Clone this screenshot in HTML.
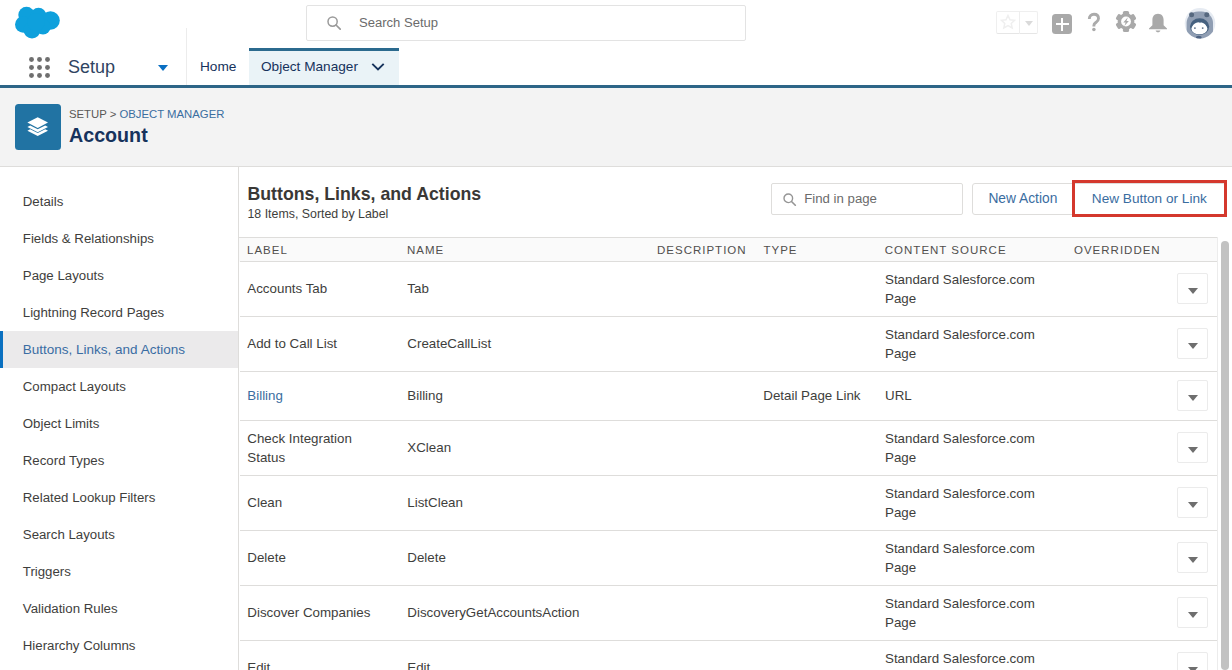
<!DOCTYPE html>
<html><head><meta charset="utf-8"><title>Setup</title>
<style>
*{box-sizing:border-box;margin:0;padding:0}
html,body{width:1232px;height:670px;overflow:hidden;background:#fff;font-family:"Liberation Sans",sans-serif}
.a{position:absolute}
.t{position:absolute;white-space:nowrap;line-height:20px}
</style></head><body>
<svg class="a" style="left:0;top:0" width="70" height="45" viewBox="0 0 70 45"><g fill="#0ea0dc">
<circle cx="26.5" cy="15" r="8.2"/><circle cx="38.5" cy="15.5" r="7.8"/><circle cx="50.5" cy="20.5" r="9.3"/>
<circle cx="23.2" cy="24.5" r="8.2"/><circle cx="32" cy="30" r="8.5"/><circle cx="43" cy="27" r="7.5"/><circle cx="36" cy="22" r="9"/>
</g></svg>
<div class="a" style="left:306.0px;top:5.0px;width:440.0px;height:36.0px;border:1px solid #e3e3e3;border-radius:2px;background:#fff"></div>
<svg class="a" style="left:327px;top:16px" width="14" height="14" viewBox="0 0 14 14"><circle cx="5.6" cy="5.6" r="4.6" fill="none" stroke="#9a9a9a" stroke-width="1.5"/><path d="M9 9l4.2 4.2" stroke="#9a9a9a" stroke-width="1.7" stroke-linecap="round"/></svg>
<div class="t" style="left:359.0px;top:13.38px;font-size:13.05px;color:#6b6b6b;font-weight:normal;">Search Setup</div>
<div class="a" style="left:996.0px;top:11.0px;width:42.0px;height:23.0px;border:1px solid #efefef;border-bottom-color:#e6e6e6;border-radius:2px"></div>
<div class="a" style="left:1019.0px;top:11.0px;width:1.0px;height:23.0px;background:#eeeeee"></div>
<svg class="a" style="left:1000px;top:14px" width="16" height="16" viewBox="0 0 16 16"><path d="M8 1.5l2 4.3 4.6.5-3.4 3.1 1 4.6L8 11.6 3.8 14l1-4.6L1.4 6.3 6 5.8z" fill="none" stroke="#efefef" stroke-width="1.5"/></svg>
<div class="a" style="left:1025px;top:21px;border-left:4px solid transparent;border-right:4px solid transparent;border-top:5px solid #dadada"></div>
<div class="a" style="left:1052.0px;top:14.0px;width:20.0px;height:20.0px;background:#a9a9a9;border-radius:3.5px"></div>
<div class="a" style="left:1055.5px;top:22.8px;width:13.0px;height:2.4px;background:#fff"></div>
<div class="a" style="left:1060.8px;top:17.5px;width:2.4px;height:13.0px;background:#fff"></div>
<svg class="a" style="left:1086px;top:12px" width="16" height="21" viewBox="0 0 16 21"><path d="M3.3 7C3.3 3.9 5.3 2.3 8 2.3s4.5 1.7 4.5 4.3c0 2.4-1.7 3.3-3 4.2-1 .7-1.6 1.3-1.6 2.6v1" fill="none" stroke="#ababab" stroke-width="2.9"/><circle cx="7.9" cy="17.6" r="1.75" fill="#ababab"/></svg>
<svg class="a" style="left:1115px;top:10px" width="22" height="23" viewBox="0 0 22 23"><g fill="#a9a9a9">
<circle cx="11" cy="11.5" r="8.3"/>
<rect x="7.9" y="1" width="6.2" height="5" rx="1.6"/><rect x="7.9" y="17" width="6.2" height="5" rx="1.6"/>
<rect x="7.9" y="1" width="6.2" height="5" rx="1.6" transform="rotate(60 11 11.5)"/><rect x="7.9" y="17" width="6.2" height="5" rx="1.6" transform="rotate(60 11 11.5)"/>
<rect x="7.9" y="1" width="6.2" height="5" rx="1.6" transform="rotate(-60 11 11.5)"/><rect x="7.9" y="17" width="6.2" height="5" rx="1.6" transform="rotate(-60 11 11.5)"/>
</g><circle cx="11" cy="11.5" r="4.9" fill="#fff"/><path d="M12.9 7.3l-4.6 5.1h2.4l-1.4 3.6 4.6-5.1h-2.4z" fill="#a9a9a9"/></svg>
<svg class="a" style="left:1148px;top:13px" width="20" height="20" viewBox="0 0 20 20"><path d="M10 0.8c-3.7 0-5.6 2.8-5.6 6.2v5.3L1 15.6v.7h18v-.7l-3.4-3.3V7C15.6 3.6 13.7.8 10 .8z" fill="#a9a9a9"/><path d="M7.6 17.4h4.8c-.3 1.2-1.2 1.8-2.4 1.8s-2.1-.6-2.4-1.8z" fill="#a9a9a9"/></svg>
<svg class="a" style="left:1184px;top:7px" width="32" height="33" viewBox="0 0 32 33">
<defs><clipPath id="avc"><circle cx="16" cy="16.3" r="15.3"/></clipPath></defs>
<circle cx="16" cy="16.3" r="15.3" fill="#e6ebf2"/>
<g clip-path="url(#avc)">
<rect x="2.6" y="4.6" width="26.4" height="34" rx="11.5" fill="#909eb3"/>
<ellipse cx="14.8" cy="30.6" rx="2.8" ry="1.9" fill="#4d6282"/>
</g>
<circle cx="7.6" cy="7.8" r="2.5" fill="#56687f"/><circle cx="22.8" cy="7.8" r="2.5" fill="#56687f"/>
<ellipse cx="15.6" cy="19.6" rx="9.6" ry="8.3" fill="#46617f"/>
<ellipse cx="15.4" cy="21.8" rx="8" ry="5.5" fill="#fff"/>
<path d="M8.3 19.5c1.5-3.2 4-4.2 7-4.2 3.2 0 5.8 1.2 7.3 4.4z" fill="#fff"/>
<path d="M14.2 13.2l1.8 3 1.4-2.6" fill="#46617f"/>
<circle cx="10.9" cy="21.1" r="0.95" fill="#5d6f86"/><circle cx="18.7" cy="21.1" r="0.95" fill="#5d6f86"/>
</svg>
<svg class="a" style="left:28.8px;top:57px" width="22" height="22" viewBox="0 0 22 22"><g fill="#6f6f6f"><circle cx="2.5" cy="2.5" r="2.45"/><circle cx="2.5" cy="10.5" r="2.45"/><circle cx="2.5" cy="18.5" r="2.45"/><circle cx="10.5" cy="2.5" r="2.45"/><circle cx="10.5" cy="10.5" r="2.45"/><circle cx="10.5" cy="18.5" r="2.45"/><circle cx="18.5" cy="2.5" r="2.45"/><circle cx="18.5" cy="10.5" r="2.45"/><circle cx="18.5" cy="18.5" r="2.45"/></g></svg>
<div class="t" style="left:68.0px;top:56.76px;font-size:18.00px;color:#2f4462;font-weight:normal;letter-spacing:0px">Setup</div>
<div class="a" style="left:157.5px;top:65px;border-left:5.2px solid transparent;border-right:5.2px solid transparent;border-top:6.3px solid #0a6fc2"></div>
<div class="a" style="left:186.0px;top:28.0px;width:1.0px;height:57.0px;background:#ececec"></div>
<div class="t" style="left:200.0px;top:57.46px;font-size:13.68px;color:#16325c;font-weight:normal;">Home</div>
<div class="a" style="left:248.5px;top:48.0px;width:150.0px;height:37.0px;background:#eaf3f7;border-top:3px solid #2b6a8e"></div>
<div class="t" style="left:261.0px;top:57.47px;font-size:13.63px;color:#16325c;font-weight:normal;">Object Manager</div>
<svg class="a" style="left:371px;top:62px" width="14" height="10" viewBox="0 0 14 10"><path d="M1.3 1.8l5.7 5.7 5.7-5.7" fill="none" stroke="#16325c" stroke-width="1.9"/></svg>
<div class="a" style="left:0.0px;top:84.6px;width:1232.0px;height:3.2px;background:#2d6587"></div>
<div class="a" style="left:0.0px;top:87.8px;width:1232.0px;height:78.4px;background:#f3f3f3"></div>
<div class="a" style="left:0.0px;top:166.0px;width:1232.0px;height:1.0px;background:#dedddb"></div>
<div class="a" style="left:15.0px;top:104.0px;width:46.0px;height:46.0px;background:#2173a3;border-radius:3.5px"></div>
<svg class="a" style="left:27.2px;top:117.2px" width="22" height="20" viewBox="0 0 22 20"><g fill="#fff">
<path d="M10.7 0.2L21 5.6 10.7 11 0.4 5.6z"/>
<path d="M0.4 9.9L3.2 8.4 10.7 12.3 18.2 8.4 21 9.9 10.7 15.2z"/>
<path d="M0.4 13.7L3.2 12.2 10.7 16.1 18.2 12.2 21 13.7 10.7 19z"/>
</g></svg>
<div class="t" style="left:69.0px;top:104.37px;font-size:11.33px;color:#5a5856;font-weight:normal;">SETUP &gt; <span style="color:#3a6ea0">OBJECT MANAGER</span></div>
<div class="t" style="left:69.0px;top:124.78px;font-size:19.68px;color:#16325c;font-weight:bold;">Account</div>
<div class="a" style="left:237.5px;top:167.0px;width:1.0px;height:503.0px;background:#dedddb"></div>
<div class="a" style="left:0.0px;top:331.0px;width:237.5px;height:37.0px;background:#ebeaeb"></div>
<div class="a" style="left:0.0px;top:331.0px;width:3.0px;height:37.0px;background:#0a70c0"></div>
<div class="t" style="left:22.8px;top:191.91px;font-size:13.25px;color:#3e3e3c;font-weight:normal;">Details</div>
<div class="t" style="left:22.8px;top:228.91px;font-size:13.25px;color:#3e3e3c;font-weight:normal;">Fields &amp; Relationships</div>
<div class="t" style="left:22.8px;top:265.91px;font-size:13.25px;color:#3e3e3c;font-weight:normal;">Page Layouts</div>
<div class="t" style="left:22.8px;top:302.91px;font-size:13.25px;color:#3e3e3c;font-weight:normal;">Lightning Record Pages</div>
<div class="t" style="left:22.8px;top:339.82px;font-size:13.50px;color:#3a6da3;font-weight:normal;">Buttons, Links, and Actions</div>
<div class="t" style="left:22.8px;top:376.91px;font-size:13.25px;color:#3e3e3c;font-weight:normal;">Compact Layouts</div>
<div class="t" style="left:22.8px;top:413.91px;font-size:13.25px;color:#3e3e3c;font-weight:normal;">Object Limits</div>
<div class="t" style="left:22.8px;top:450.91px;font-size:13.25px;color:#3e3e3c;font-weight:normal;">Record Types</div>
<div class="t" style="left:22.8px;top:487.91px;font-size:13.25px;color:#3e3e3c;font-weight:normal;">Related Lookup Filters</div>
<div class="t" style="left:22.8px;top:524.91px;font-size:13.25px;color:#3e3e3c;font-weight:normal;">Search Layouts</div>
<div class="t" style="left:22.8px;top:561.91px;font-size:13.25px;color:#3e3e3c;font-weight:normal;">Triggers</div>
<div class="t" style="left:22.8px;top:598.91px;font-size:13.25px;color:#3e3e3c;font-weight:normal;">Validation Rules</div>
<div class="t" style="left:22.8px;top:635.91px;font-size:13.25px;color:#3e3e3c;font-weight:normal;">Hierarchy Columns</div>
<div class="t" style="left:247.5px;top:183.65px;font-size:17.73px;color:#3a3836;font-weight:bold;">Buttons, Links, and Actions</div>
<div class="t" style="left:247.5px;top:203.71px;font-size:12.36px;color:#3e3e3c;font-weight:normal;">18 Items, Sorted by Label</div>
<div class="a" style="left:771.3px;top:183.3px;width:191.4px;height:31.4px;border:1px solid #dedddb;border-radius:2px;background:#fff"></div>
<svg class="a" style="left:783px;top:193px" width="14" height="13" viewBox="0 0 14 13"><circle cx="5.3" cy="5.3" r="4.3" fill="none" stroke="#959595" stroke-width="1.4"/><path d="M8.5 8.5l3.8 3.8" stroke="#959595" stroke-width="1.6" stroke-linecap="round"/></svg>
<div class="t" style="left:804.2px;top:189.31px;font-size:13.23px;color:#6b6b6b;font-weight:normal;">Find in page</div>
<div class="a" style="left:972.3px;top:182.8px;width:254.0px;height:32.0px;border:1px solid #dedddb;border-radius:3px;background:#fff"></div>
<div class="t" style="left:988.4px;top:189.02px;font-size:13.79px;color:#3a6d9f;font-weight:normal;">New Action</div>
<div class="t" style="left:1091.8px;top:188.78px;font-size:13.61px;color:#3a6d9f;font-weight:normal;">New Button or Link</div>
<div class="a" style="left:1071.8px;top:180.2px;width:155.4px;height:36.7px;border:3px solid #d4382d"></div>
<div class="a" style="left:238.5px;top:237.0px;width:979.0px;height:24.5px;background:#fafafa"></div>
<div class="a" style="left:238.5px;top:237.0px;width:979.0px;height:1.0px;background:#dedddb"></div>
<div class="a" style="left:240.0px;top:261.0px;width:977.0px;height:1.0px;background:#dedddb"></div>
<div class="t" style="left:247.0px;top:239.71px;font-size:11.50px;color:#514f4d;font-weight:normal;letter-spacing:1px">LABEL</div>
<div class="t" style="left:407.0px;top:239.71px;font-size:11.50px;color:#514f4d;font-weight:normal;letter-spacing:1px">NAME</div>
<div class="t" style="left:657.0px;top:239.71px;font-size:11.50px;color:#514f4d;font-weight:normal;letter-spacing:1px">DESCRIPTION</div>
<div class="t" style="left:763.5px;top:239.71px;font-size:11.50px;color:#514f4d;font-weight:normal;letter-spacing:1px">TYPE</div>
<div class="t" style="left:884.8px;top:239.71px;font-size:11.50px;color:#514f4d;font-weight:normal;letter-spacing:1px">CONTENT SOURCE</div>
<div class="t" style="left:1074.0px;top:239.71px;font-size:11.50px;color:#514f4d;font-weight:normal;letter-spacing:1px">OVERRIDDEN</div>
<div class="t" style="left:247.3px;top:278.57px;font-size:13.35px;color:#3e3e3c;font-weight:normal;">Accounts Tab</div>
<div class="t" style="left:407.3px;top:278.57px;font-size:13.35px;color:#3e3e3c;font-weight:normal;">Tab</div>
<div class="t" style="left:885.0px;top:269.57px;font-size:13.35px;color:#3e3e3c;font-weight:normal;">Standard Salesforce.com</div>
<div class="t" style="left:885.0px;top:288.57px;font-size:13.35px;color:#3e3e3c;font-weight:normal;">Page</div>
<div class="a" style="left:1177.3px;top:273.3px;width:31.2px;height:31.2px;border:1px solid #ebebeb;border-radius:2px;background:#fff"></div>
<div class="a" style="left:1188px;top:288.0px;border-left:5px solid transparent;border-right:5px solid transparent;border-top:6px solid #6e6e6e"></div>
<div class="a" style="left:240.0px;top:316.0px;width:977.0px;height:1.0px;background:#dedddb"></div>
<div class="t" style="left:247.3px;top:333.57px;font-size:13.35px;color:#3e3e3c;font-weight:normal;">Add to Call List</div>
<div class="t" style="left:407.3px;top:333.57px;font-size:13.35px;color:#3e3e3c;font-weight:normal;">CreateCallList</div>
<div class="t" style="left:885.0px;top:324.57px;font-size:13.35px;color:#3e3e3c;font-weight:normal;">Standard Salesforce.com</div>
<div class="t" style="left:885.0px;top:343.57px;font-size:13.35px;color:#3e3e3c;font-weight:normal;">Page</div>
<div class="a" style="left:1177.3px;top:328.3px;width:31.2px;height:31.2px;border:1px solid #ebebeb;border-radius:2px;background:#fff"></div>
<div class="a" style="left:1188px;top:343.0px;border-left:5px solid transparent;border-right:5px solid transparent;border-top:6px solid #6e6e6e"></div>
<div class="a" style="left:240.0px;top:371.0px;width:977.0px;height:1.0px;background:#dedddb"></div>
<div class="t" style="left:247.3px;top:385.57px;font-size:13.35px;color:#3a6d9f;font-weight:normal;">Billing</div>
<div class="t" style="left:407.3px;top:385.57px;font-size:13.35px;color:#3e3e3c;font-weight:normal;">Billing</div>
<div class="t" style="left:763.3px;top:385.57px;font-size:13.35px;color:#3e3e3c;font-weight:normal;">Detail Page Link</div>
<div class="t" style="left:885.0px;top:385.57px;font-size:13.35px;color:#3e3e3c;font-weight:normal;">URL</div>
<div class="a" style="left:1177.3px;top:380.3px;width:31.2px;height:31.2px;border:1px solid #ebebeb;border-radius:2px;background:#fff"></div>
<div class="a" style="left:1188px;top:395.0px;border-left:5px solid transparent;border-right:5px solid transparent;border-top:6px solid #6e6e6e"></div>
<div class="a" style="left:240.0px;top:420.0px;width:977.0px;height:1.0px;background:#dedddb"></div>
<div class="t" style="left:247.3px;top:428.57px;font-size:13.35px;color:#3e3e3c;font-weight:normal;">Check Integration</div>
<div class="t" style="left:247.3px;top:447.57px;font-size:13.35px;color:#3e3e3c;font-weight:normal;">Status</div>
<div class="t" style="left:407.3px;top:437.57px;font-size:13.35px;color:#3e3e3c;font-weight:normal;">XClean</div>
<div class="t" style="left:885.0px;top:428.57px;font-size:13.35px;color:#3e3e3c;font-weight:normal;">Standard Salesforce.com</div>
<div class="t" style="left:885.0px;top:447.57px;font-size:13.35px;color:#3e3e3c;font-weight:normal;">Page</div>
<div class="a" style="left:1177.3px;top:432.3px;width:31.2px;height:31.2px;border:1px solid #ebebeb;border-radius:2px;background:#fff"></div>
<div class="a" style="left:1188px;top:447.0px;border-left:5px solid transparent;border-right:5px solid transparent;border-top:6px solid #6e6e6e"></div>
<div class="a" style="left:240.0px;top:475.0px;width:977.0px;height:1.0px;background:#dedddb"></div>
<div class="t" style="left:247.3px;top:492.57px;font-size:13.35px;color:#3e3e3c;font-weight:normal;">Clean</div>
<div class="t" style="left:407.3px;top:492.57px;font-size:13.35px;color:#3e3e3c;font-weight:normal;">ListClean</div>
<div class="t" style="left:885.0px;top:483.57px;font-size:13.35px;color:#3e3e3c;font-weight:normal;">Standard Salesforce.com</div>
<div class="t" style="left:885.0px;top:502.57px;font-size:13.35px;color:#3e3e3c;font-weight:normal;">Page</div>
<div class="a" style="left:1177.3px;top:487.3px;width:31.2px;height:31.2px;border:1px solid #ebebeb;border-radius:2px;background:#fff"></div>
<div class="a" style="left:1188px;top:502.0px;border-left:5px solid transparent;border-right:5px solid transparent;border-top:6px solid #6e6e6e"></div>
<div class="a" style="left:240.0px;top:530.0px;width:977.0px;height:1.0px;background:#dedddb"></div>
<div class="t" style="left:247.3px;top:547.57px;font-size:13.35px;color:#3e3e3c;font-weight:normal;">Delete</div>
<div class="t" style="left:407.3px;top:547.57px;font-size:13.35px;color:#3e3e3c;font-weight:normal;">Delete</div>
<div class="t" style="left:885.0px;top:538.57px;font-size:13.35px;color:#3e3e3c;font-weight:normal;">Standard Salesforce.com</div>
<div class="t" style="left:885.0px;top:557.57px;font-size:13.35px;color:#3e3e3c;font-weight:normal;">Page</div>
<div class="a" style="left:1177.3px;top:542.3px;width:31.2px;height:31.2px;border:1px solid #ebebeb;border-radius:2px;background:#fff"></div>
<div class="a" style="left:1188px;top:557.0px;border-left:5px solid transparent;border-right:5px solid transparent;border-top:6px solid #6e6e6e"></div>
<div class="a" style="left:240.0px;top:585.0px;width:977.0px;height:1.0px;background:#dedddb"></div>
<div class="t" style="left:247.3px;top:602.57px;font-size:13.35px;color:#3e3e3c;font-weight:normal;">Discover Companies</div>
<div class="t" style="left:407.3px;top:602.57px;font-size:13.35px;color:#3e3e3c;font-weight:normal;">DiscoveryGetAccountsAction</div>
<div class="t" style="left:885.0px;top:593.57px;font-size:13.35px;color:#3e3e3c;font-weight:normal;">Standard Salesforce.com</div>
<div class="t" style="left:885.0px;top:612.57px;font-size:13.35px;color:#3e3e3c;font-weight:normal;">Page</div>
<div class="a" style="left:1177.3px;top:597.3px;width:31.2px;height:31.2px;border:1px solid #ebebeb;border-radius:2px;background:#fff"></div>
<div class="a" style="left:1188px;top:612.0px;border-left:5px solid transparent;border-right:5px solid transparent;border-top:6px solid #6e6e6e"></div>
<div class="a" style="left:240.0px;top:640.0px;width:977.0px;height:1.0px;background:#dedddb"></div>
<div class="t" style="left:247.3px;top:657.57px;font-size:13.35px;color:#3e3e3c;font-weight:normal;">Edit</div>
<div class="t" style="left:407.3px;top:657.57px;font-size:13.35px;color:#3e3e3c;font-weight:normal;">Edit</div>
<div class="t" style="left:885.0px;top:648.57px;font-size:13.35px;color:#3e3e3c;font-weight:normal;">Standard Salesforce.com</div>
<div class="t" style="left:885.0px;top:667.57px;font-size:13.35px;color:#3e3e3c;font-weight:normal;">Page</div>
<div class="a" style="left:1177.3px;top:652.3px;width:31.2px;height:31.2px;border:1px solid #ebebeb;border-radius:2px;background:#fff"></div>
<div class="a" style="left:1188px;top:667.0px;border-left:5px solid transparent;border-right:5px solid transparent;border-top:6px solid #6e6e6e"></div>
<div class="a" style="left:1217.0px;top:237.0px;width:15.0px;height:433.0px;background:#fff;border-left:1px solid #ececec"></div>
<div class="a" style="left:1221.0px;top:241.0px;width:8.0px;height:429.0px;background:#c2c2c2;border-radius:4px"></div>
</body></html>
